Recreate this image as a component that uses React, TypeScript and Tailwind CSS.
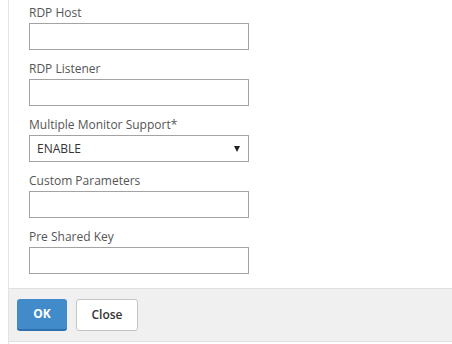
const fields = ["RDP Host", "RDP Listener"];
const fields2 = ["Custom Parameters", "Pre Shared Key"];

function Field({ label, children }: { label: string; children?: React.ReactNode }) {
  return (
    <div className="flex flex-col">
      <label className="h-[17px] text-[12px] leading-[14px] text-[#555]">{label}</label>
      {children ?? <input className="h-[27px] w-[220px] border border-[#a3a3a3] bg-white outline-none" />}
    </div>
  );
}

export default function App() {
  return (
    <div
      className="flex h-[344px] w-[452px] flex-col bg-white"
      style={{ fontFamily: '"Open Sans", "Noto Sans", sans-serif' }}
    >
      <div className="ml-[8px] flex flex-1 flex-col border-l border-[#e3e3e3]">
        <div className="flex h-[288px] flex-col gap-[12px] pl-[20px] pt-[6px]">
          {fields.map((f) => (
            <Field key={f} label={f} />
          ))}
          <Field label="Multiple Monitor Support*">
            <div className="flex h-[27px] w-[220px] items-center justify-between border border-[#a3a3a3] bg-white pl-[7px] pr-[8px]">
              <span className="text-[12px] text-[#333]">ENABLE</span>
              <svg width="6" height="6" viewBox="0 0 6 6">
                <polygon points="0,0 6,0 3,6" fill="#222" />
              </svg>
            </div>
          </Field>
          {fields2.map((f) => (
            <Field key={f} label={f} />
          ))}
        </div>
        <div className="flex h-[54px] items-center gap-[9px] border-y border-[#e0e0e0] bg-[#f0f0f0] pl-[8px]">
          <button className="h-[32px] w-[50px] rounded-[3px] border-b-2 border-[#2f6fae] bg-[#428bca] text-[12px] font-bold text-white">
            OK
          </button>
          <button className="h-[32px] w-[62px] rounded-[3px] border border-[#c4c4c4] bg-white text-[12px] font-semibold text-[#333]">
            Close
          </button>
        </div>
        <div className="h-[2px]" />
      </div>
    </div>
  );
}
